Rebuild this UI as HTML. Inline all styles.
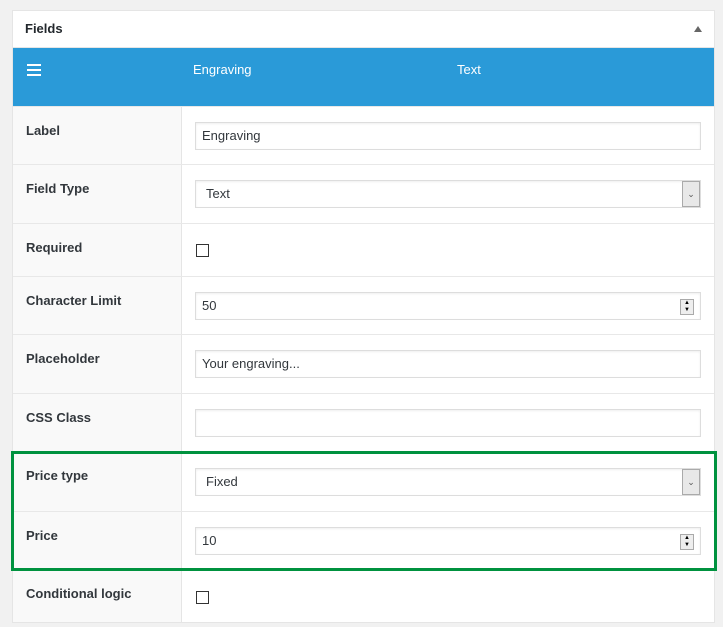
<!DOCTYPE html><html><head><style>
body{margin:0;background:#f1f1f1;font-family:"Liberation Sans",sans-serif;width:723px;height:627px;overflow:hidden;position:relative}
.panel{position:absolute;left:12px;top:10px;width:701px;height:611px;background:#fff;border:1px solid #e5e5e5}
.hd{height:36px;border-bottom:1px solid #e5e5e5;font-size:13px;font-weight:bold;color:#23282d;line-height:36px;padding-left:12px;position:relative}
.tri{position:absolute;right:12px;top:15px;width:0;height:0;border-left:4px solid transparent;border-right:4px solid transparent;border-bottom:6px solid #666}
.blue{height:58px;background:#2a9ad8;color:#fff;font-size:13px;position:relative}
.blue span{position:absolute;top:14px}
.ham{position:absolute;left:14px;top:16px;width:14px}
.ham i{display:block;height:2px;background:#fff;margin-bottom:3px}
.row{position:absolute;left:0;width:701px;border-top:1px solid #e8e8e8}
.lab{position:absolute;left:0;top:0;bottom:0;width:169px;background:#f9f9f9;border-right:1px solid #e5e5e5;font-size:13px;font-weight:bold;color:#32373c;padding:16px 0 0 13px;box-sizing:border-box}
.inp{position:absolute;left:182px;width:506px;height:28px;border:1px solid #ddd;box-shadow:inset 0 1px 2px rgba(0,0,0,.07);font-size:13px;color:#32373c;line-height:26px;padding-left:6px;box-sizing:border-box}
.sel{padding-left:10px}
.sel .arr{position:absolute;right:0;top:0;width:16px;height:24px;border:1px solid #aaa;background:#e8e8e8;font-size:9px;color:#555;text-align:center;line-height:24px}
.spin{position:absolute;right:6px;top:6px;width:12px;height:14px;border:1px solid #aaa;background:#eee;font-size:6px;line-height:7px;text-align:center;color:#000}
.cb{position:absolute;left:183px;width:11px;height:11px;border:1px solid #333}
.green{position:absolute;left:11px;top:451px;width:700px;height:114px;border:3px solid #00923f}
</style></head><body>
<div class="panel">
<div class="hd">Fields<div class="tri"></div></div>
<div class="blue"><div class="ham"><i></i><i></i><i></i></div><span style="left:180px">Engraving</span><span style="left:444px">Text</span></div>
<div class="row" style="top:95px;height:57px"><div class="lab">Label</div><div class="inp" style="top:15px">Engraving</div></div>
<div class="row" style="top:153px;height:58px"><div class="lab">Field Type</div><div class="inp sel" style="top:15px">Text<div class="arr">&#8964;</div></div></div>
<div class="row" style="top:212px;height:52px"><div class="lab">Required</div><div class="cb" style="top:20px"></div></div>
<div class="row" style="top:265px;height:57px"><div class="lab">Character Limit</div><div class="inp" style="top:15px">50<div class="spin">▲<br>▼</div></div></div>
<div class="row" style="top:323px;height:58px"><div class="lab">Placeholder</div><div class="inp" style="top:15px">Your engraving...</div></div>
<div class="row" style="top:382px;height:57px"><div class="lab">CSS Class</div><div class="inp" style="top:15px"></div></div>
<div class="row" style="top:440px;height:59px"><div class="lab">Price type</div><div class="inp sel" style="top:16px">Fixed<div class="arr">&#8964;</div></div></div>
<div class="row" style="top:500px;height:57px"><div class="lab">Price</div><div class="inp" style="top:15px">10<div class="spin">▲<br>▼</div></div></div>
<div class="row" style="top:558px;height:52px"><div class="lab">Conditional logic</div><div class="cb" style="top:21px"></div></div>
</div>
<div class="green"></div>
</body></html>
